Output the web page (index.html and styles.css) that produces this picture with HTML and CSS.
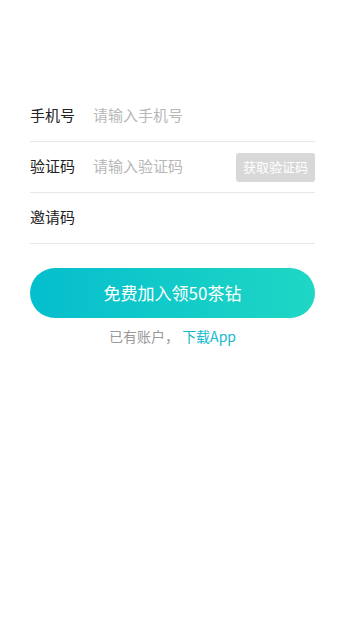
FILE: index.html
```html
<!DOCTYPE html>
<html lang="zh">
<head>
<meta charset="utf-8">
<link rel="stylesheet" href="styles.css">
</head>
<body>
<div class="page">
  <div class="form">
    <div class="row">
      <span class="label">手机号</span>
      <span class="placeholder">请输入手机号</span>
    </div>
    <div class="row">
      <span class="label">验证码</span>
      <span class="placeholder">请输入验证码</span>
      <span class="code-btn">获取验证码</span>
    </div>
    <div class="row">
      <span class="label">邀请码</span>
    </div>
  </div>
  <div class="submit">免费加入领50茶钻</div>
  <div class="footer">已有账户， <span class="link">下载App</span></div>
</div>
</body>
</html>
```

FILE: styles.css
```css
* { box-sizing: border-box; }
html, body { margin: 0; padding: 0; background: #fff; }
body {
  font-family: "Noto Sans CJK SC", "Liberation Sans", sans-serif;
  width: 346px;
  height: 624px;
}
.page {
  padding: 91px 31px 0 30px;
}
.form {
  display: flex;
  flex-direction: column;
}
.row {
  display: flex;
  align-items: center;
  height: 51px;
  padding-bottom: 3px;
  border-bottom: 1px solid #e8e8e8;
}
.label {
  font-size: 15px;
  color: #222;
  width: 63px;
  flex: none;
}
.placeholder {
  font-size: 15px;
  color: #b8b8b8;
  flex: 1;
}
.code-btn {
  background: #d8d8d8;
  color: #fff;
  font-size: 13px;
  height: 29px;
  line-height: 27px;
  padding: 0 7px;
  border-radius: 3px;
  margin-top: 3px;
}
.submit {
  margin-top: 24px;
  height: 50px;
  border-radius: 25px;
  background: linear-gradient(90deg, #05bece, #1fd7c3);
  color: #fff;
  font-size: 17px;
  display: flex;
  align-items: center;
  justify-content: center;
  padding-bottom: 2px;
}
.footer {
  margin-top: 8px;
  text-align: center;
  font-size: 14px;
  color: #999;
  line-height: 20px;
}
.link { color: #14b9cc; }
```
